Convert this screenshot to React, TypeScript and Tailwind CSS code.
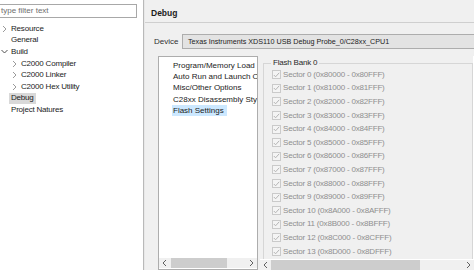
import React from 'react';

const treeRows: { label: string; indent: number; arrow?: 'right' | 'down'; selected?: boolean }[] = [
  { label: 'Resource', indent: 0, arrow: 'right' },
  { label: 'General', indent: 0 },
  { label: 'Build', indent: 0, arrow: 'down' },
  { label: 'C2000 Compiler', indent: 1, arrow: 'right' },
  { label: 'C2000 Linker', indent: 1, arrow: 'right' },
  { label: 'C2000 Hex Utility', indent: 1, arrow: 'right' },
  { label: 'Debug', indent: 0, selected: true },
  { label: 'Project Natures', indent: 0 },
];

const categories = [
  'Program/Memory Load',
  'Auto Run and Launch Options',
  'Misc/Other Options',
  'C28xx Disassembly Style',
  'Flash Settings',
];

const sectors = Array.from({ length: 14 }, (_, i) => {
  const hex = (0x80 + i).toString(16).toUpperCase();
  return `Sector ${i} (0x${hex}000 - 0x${hex}FFF)`;
});

const Chevron = ({ dir, className }: { dir: 'left' | 'right' | 'down'; className?: string }) => {
  const d = dir === 'right' ? 'M1 1 L4 4 L1 7' : dir === 'left' ? 'M4 1 L1 4 L4 7' : 'M0.5 2 L3.5 5 L6.5 2';
  return (
    <svg width={dir === 'down' ? 7 : 5} height={8} viewBox={dir === 'down' ? '0 0 7 8' : '0 0 5 8'} className={className}>
      <path d={d} fill="none" stroke="currentColor" strokeWidth={1} />
    </svg>
  );
};

const HScroll = ({ thumbStart, thumbWidth }: { thumbStart: number; thumbWidth: number }) => (
  <div className="h-[10px] flex items-stretch bg-[#f0f0f0] shrink-0">
    <div className="w-[11px] flex items-center justify-center text-[#606060]">
      <Chevron dir="left" />
    </div>
    <div className="flex-1 flex items-stretch">
      <div className="shrink-0" style={{ width: thumbStart }} />
      <div className="bg-[#cdcdcd] shrink-0" style={{ width: thumbWidth }} />
      <div className="flex-1" />
    </div>
    <div className="w-[11px] flex items-center justify-center text-[#606060]">
      <Chevron dir="right" />
    </div>
  </div>
);

export default function App() {
  return (
    <div className="w-[474px] h-[270px] flex overflow-hidden bg-white text-[8px] tracking-[-0.2px] leading-none text-[#1b1b1b] font-['Liberation_Sans',Arial,sans-serif]">
      {/* Left: filter + tree */}
      <div className="w-[143px] shrink-0 flex flex-col bg-white">
        <div className="mt-[4px] -ml-[2px] w-[139px] h-[14px] border border-[#a8a8a8] flex items-center pl-[2px] tracking-normal text-[#6e6e6e]">
          type filter text
        </div>
        <div className="mt-[5px] flex flex-col">
          {treeRows.map((r) => (
            <div key={r.label} className="h-[11.6px] flex items-center" style={{ paddingLeft: r.indent * 10 }}>
              <div className="w-[11px] flex items-center pl-[2px] shrink-0">
                {r.arrow === 'right' && <Chevron dir="right" className="text-[#9a9a9a]" />}
                {r.arrow === 'down' && <Chevron dir="down" className="text-[#505050] -ml-[1px]" />}
              </div>
              <span className={r.selected ? 'bg-[#d9d9d9] px-[2px] -ml-[2px] h-full flex items-center' : ''}>{r.label}</span>
            </div>
          ))}
        </div>
      </div>

      {/* Sash */}
      <div className="w-[2px] shrink-0 border-l border-[#b9b9b9] bg-[#e8e8e8]" />

      {/* Right: property page */}
      <div className="flex-1 min-w-0 flex flex-col bg-[#f0f0f0]">
        <div className="h-[23px] shrink-0 flex items-center pl-[6px] pt-[4px] font-bold text-[8.5px] tracking-normal border-b border-[#cfcfcf]">
          Debug
        </div>

        <div className="mt-[11px] h-[15px] shrink-0 flex items-center pl-[9px]">
          <span className="w-[28px] shrink-0 text-[#303030] tracking-normal">Device</span>
          <div className="flex-1 h-full -mr-[4px] border border-[#adadad] bg-[#e3e3e3] flex items-center pl-[5px] text-[7.2px] tracking-normal whitespace-nowrap overflow-hidden">
            Texas Instruments XDS110 USB Debug Probe_0/C28xx_CPU1
          </div>
        </div>

        <div className="mt-[7px] flex-1 min-h-0 flex">
          {/* Category list */}
          <div className="ml-[13px] w-[100px] shrink-0 bg-white border border-[#adadad] flex flex-col">
            <div className="pt-[3px] flex-1 overflow-hidden tracking-normal">
              {categories.map((c) => (
                <div key={c} className="h-[11.3px] flex items-center pl-[14px] whitespace-nowrap">
                  <span className={c === 'Flash Settings' ? 'bg-[#cce8ff] h-full flex items-center pl-[1px] pr-[3px] -ml-[1px]' : ''}>
                    {c}
                  </span>
                </div>
              ))}
            </div>
            <HScroll thumbStart={1} thumbWidth={56} />
            <div className="h-[1px]" />
          </div>

          {/* Flash settings area */}
          <div className="ml-[2px] flex-1 min-w-0 flex flex-col">
            <div className="flex-1 min-h-0 overflow-hidden pt-[3px] pl-[3px] border-r border-white">
              <fieldset className="border border-[#d6d6d6] pl-[8px] pt-[1px] pb-[4px]">
                <legend className="-ml-[1px] px-[2px] text-[#2a2a2a]">Flash Bank 0</legend>
                {sectors.map((s) => (
                  <label key={s} className="h-[13.6px] flex items-center gap-[2px] text-[#8f8f8f] whitespace-nowrap">
                    <span className="w-[9px] h-[9px] border border-[#cacaca] bg-[#f4f4f4] flex items-center justify-center shrink-0">
                      <svg width="7" height="6" viewBox="0 0 7 6">
                        <path d="M0.8 3 L2.6 4.8 L6.2 0.8" fill="none" stroke="#b4b4b4" strokeWidth={1} />
                      </svg>
                    </span>
                    {s}
                  </label>
                ))}
              </fieldset>
            </div>
            <div className="border-t border-white">
              <HScroll thumbStart={0} thumbWidth={149} />
            </div>
          </div>
        </div>
      </div>
    </div>
  );
}
